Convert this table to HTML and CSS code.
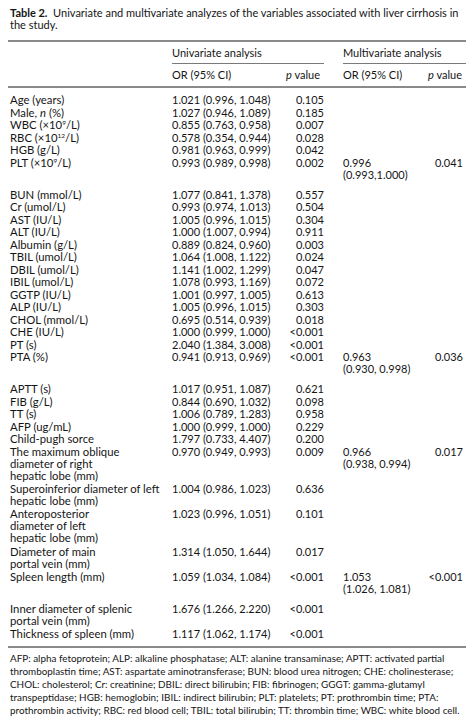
FILE: index.html
```html
<!DOCTYPE html>
<html lang="en">
<head>
<meta charset="utf-8">
<title>Table 2</title>
<link rel="stylesheet" href="styles.css">
</head>
<body>
<div class="page">
  <p class="caption"><b>Table 2.</b>&nbsp; Univariate and multivariate analyzes of the variables associated with liver cirrhosis in<br>the study.</p>

  <div class="grid head">
    <div class="group uni">Univariate analysis</div>
    <div class="group multi">Multivariate analysis</div>
    <div class="sub h-or">OR (95% CI)</div>
    <div class="sub h-p"><i>p</i> value</div>
    <div class="sub h-mor">OR (95% CI)</div>
    <div class="sub h-mp"><i>p</i> value</div>
  </div>

  <div class="grid body">
    <div class="lab">Age (years)</div><div class="or">1.021 (0.996, 1.048)</div><div class="p">0.105</div>
    <div class="lab">Male, <i>n</i> (%)</div><div class="or">1.027 (0.946, 1.089)</div><div class="p">0.185</div>
    <div class="lab">WBC (&times;10<sup>9</sup>/L)</div><div class="or">0.855 (0.763, 0.958)</div><div class="p">0.007</div>
    <div class="lab">RBC (&times;10<sup>12</sup>/L)</div><div class="or">0.578 (0.354, 0.944)</div><div class="p">0.028</div>
    <div class="lab">HGB (g/L)</div><div class="or">0.981 (0.963, 0.999)</div><div class="p">0.042</div>
    <div class="lab">PLT (&times;10<sup>9</sup>/L)</div><div class="or">0.993 (0.989, 0.998)</div><div class="p">0.002</div><div class="mor sp">0.996<br>(0.993,1.000)</div><div class="mp">0.041</div>
    <div class="lab">BUN (mmol/L)</div><div class="or">1.077 (0.841, 1.378)</div><div class="p">0.557</div>
    <div class="lab">Cr (umol/L)</div><div class="or">0.993 (0.974, 1.013)</div><div class="p">0.504</div>
    <div class="lab">AST (IU/L)</div><div class="or">1.005 (0.996, 1.015)</div><div class="p">0.304</div>
    <div class="lab">ALT (IU/L)</div><div class="or">1.000 (1.007, 0.994)</div><div class="p">0.911</div>
    <div class="lab">Albumin (g/L)</div><div class="or">0.889 (0.824, 0.960)</div><div class="p">0.003</div>
    <div class="lab">TBIL (umol/L)</div><div class="or">1.064 (1.008, 1.122)</div><div class="p">0.024</div>
    <div class="lab">DBIL (umol/L)</div><div class="or">1.141 (1.002, 1.299)</div><div class="p">0.047</div>
    <div class="lab">IBIL (umol/L)</div><div class="or">1.078 (0.993, 1.169)</div><div class="p">0.072</div>
    <div class="lab">GGTP (IU/L)</div><div class="or">1.001 (0.997, 1.005)</div><div class="p">0.613</div>
    <div class="lab">ALP (IU/L)</div><div class="or">1.005 (0.996, 1.015)</div><div class="p">0.303</div>
    <div class="lab">CHOL (mmol/L)</div><div class="or">0.695 (0.514, 0.939)</div><div class="p">0.018</div>
    <div class="lab">CHE (IU/L)</div><div class="or">1.000 (0.999, 1.000)</div><div class="p">&lt;0.001</div>
    <div class="lab">PT (s)</div><div class="or">2.040 (1.384, 3.008)</div><div class="p">&lt;0.001</div>
    <div class="lab">PTA (%)</div><div class="or">0.941 (0.913, 0.969)</div><div class="p">&lt;0.001</div><div class="mor sp">0.963<br>(0.930, 0.998)</div><div class="mp">0.036</div>
    <div class="lab">APTT (s)</div><div class="or">1.017 (0.951, 1.087)</div><div class="p">0.621</div>
    <div class="lab">FIB (g/L)</div><div class="or">0.844 (0.690, 1.032)</div><div class="p">0.098</div>
    <div class="lab">TT (s)</div><div class="or">1.006 (0.789, 1.283)</div><div class="p">0.958</div>
    <div class="lab">AFP (ug/mL)</div><div class="or">1.000 (0.999, 1.000)</div><div class="p">0.229</div>
    <div class="lab">Child-pugh sorce</div><div class="or">1.797 (0.733, 4.407)</div><div class="p">0.200</div>
    <div class="lab l3">The maximum oblique<br>diameter of right<br>hepatic lobe (mm)</div><div class="or">0.970 (0.949, 0.993)</div><div class="p">0.009</div><div class="mor">0.966<br>(0.938, 0.994)</div><div class="mp">0.017</div>
    <div class="lab l2">Superoinferior diameter of left<br>hepatic lobe (mm)</div><div class="or">1.004 (0.986, 1.023)</div><div class="p">0.636</div>
    <div class="lab l3">Anteroposterior<br>diameter of left<br>hepatic lobe (mm)</div><div class="or">1.023 (0.996, 1.051)</div><div class="p">0.101</div>
    <div class="lab l2">Diameter of main<br>portal vein (mm)</div><div class="or">1.314 (1.050, 1.644)</div><div class="p">0.017</div>
    <div class="lab">Spleen length (mm)</div><div class="or">1.059 (1.034, 1.084)</div><div class="p">&lt;0.001</div><div class="mor sp">1.053<br>(1.026, 1.081)</div><div class="mp">&lt;0.001</div>
    <div class="lab l2">Inner diameter of splenic<br>portal vein (mm)</div><div class="or">1.676 (1.266, 2.220)</div><div class="p">&lt;0.001</div>
    <div class="lab">Thickness of spleen (mm)</div><div class="or">1.117 (1.062, 1.174)</div><div class="p">&lt;0.001</div>
  </div>

  <p class="note">AFP: alpha fetoprotein; ALP: alkaline phosphatase; ALT: alanine transaminase; APTT: activated partial<br>thromboplastin time; AST: aspartate aminotransferase; BUN: blood urea nitrogen; CHE: cholinesterase;<br>CHOL: cholesterol; Cr: creatinine; DBIL: direct bilirubin; FIB: fibrinogen; GGGT: gamma-glutamyl<br>transpeptidase; HGB: hemoglobin; IBIL: indirect bilirubin; PLT: platelets; PT: prothrombin time; PTA:<br>prothrombin activity; RBC: red blood cell; TBIL: total bilirubin; TT: thrombin time; WBC: white blood cell.</p>
</div>
</body>
</html>
```

FILE: styles.css
```css
* {
  box-sizing: border-box;
}

body {
  margin: 0;
  background: #ffffff;
  color: #151515;
  font-family: Lato, "Liberation Sans", sans-serif;
}

.page {
  width: 474px;
  padding: 7px 8px 0;
}

.caption {
  margin: 0 0 9px;
  padding-left: 2px;
  font-size: 11px;
  line-height: 12px;
  white-space: nowrap;
}

.caption b {
  font-weight: 700;
}

.grid {
  display: grid;
  grid-template-columns: 164px 110px 42px 19px 77px 46px;
  font-size: 11px;
  line-height: 12px;
}

.head {
  border-top: 2px solid #8a8a8a;
  border-bottom: 2px solid #8a8a8a;
}

.group {
  margin-top: 5px;
  padding-bottom: 4px;
  border-bottom: 1px solid #7a7a7a;
}

.uni {
  grid-row: 1;
  grid-column: 2 / span 2;
}

.multi {
  grid-row: 1;
  grid-column: 5 / span 2;
}

.sub {
  grid-row: 2;
  padding: 5px 0 4.5px;
}

.h-or { grid-column: 2; }
.h-p { grid-column: 3; text-align: right; padding-right: 4px; white-space: nowrap; }
.h-mor { grid-column: 5; }
.h-mp { grid-column: 6; text-align: right; padding-right: 4px; white-space: nowrap; }

.body {
  grid-auto-rows: minmax(12.5px, auto);
  padding: 6.5px 0 6px;
  border-bottom: 2px solid #8a8a8a;
}

.lab {
  grid-column: 1;
  padding-left: 2px;
  white-space: nowrap;
  font-size: 11.3px;
}

.or {
  grid-column: 2;
  white-space: nowrap;
}

.p {
  grid-column: 3;
  text-align: right;
  white-space: nowrap;
}

.mor {
  grid-column: 5;
  padding-bottom: 1px;
  white-space: nowrap;
}

.mp {
  grid-column: 6;
  text-align: right;
  padding-right: 3px;
  white-space: nowrap;
}

.l2 {
  padding-bottom: 1px;
}

.l3 {
  padding-bottom: 1.5px;
}

.mor.sp {
  padding-bottom: 8px;
}

sup {
  font-size: 6.5px;
  line-height: 0;
  vertical-align: 4px;
}

.note {
  margin: 4px 0 0;
  padding-left: 2px;
  font-size: 9.9px;
  line-height: 13px;
  white-space: nowrap;
}
```
